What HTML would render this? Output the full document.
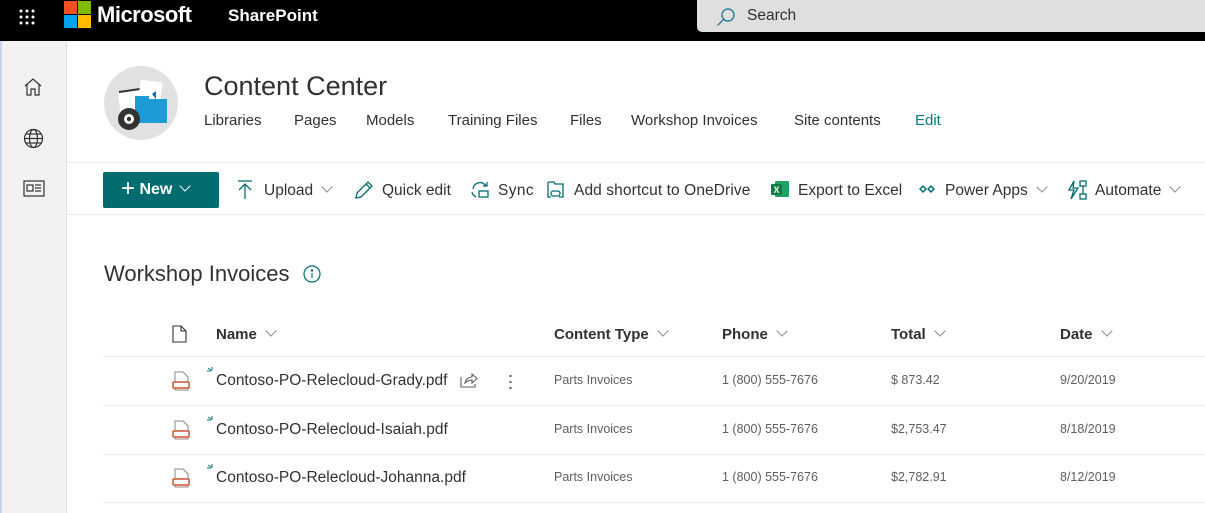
<!DOCTYPE html>
<html><head><meta charset="utf-8"><style>
*{margin:0;padding:0;box-sizing:border-box}
body{width:1205px;height:513px;overflow:hidden;background:#fff;font-family:"Liberation Sans",sans-serif;color:#323130;position:relative}
.a{position:absolute;white-space:nowrap}
.top{position:absolute;left:0;top:0;width:1205px;height:41px;background:#000}
.rail{position:absolute;left:0;top:41px;width:67px;height:472px;background:#f3f2f1;border-right:1px solid #e1dfdd;border-left:2px solid #c7d4ea}
.nav{font-size:15px;color:#323130;top:112px}
.cmd{font-size:15.5px;color:#323130;top:181px}
.hd{font-size:15px;font-weight:bold;color:#323130;top:326px}
.sm{font-size:12.5px;color:#605e5c}
.fn{font-size:15.5px;color:#323130}
.line{position:absolute;left:103px;width:1102px;height:1px;background:#edebe9}
.chev{display:inline-block;width:8px;height:8px;border-right:1.3px solid #8a8886;border-bottom:1.3px solid #8a8886;transform:rotate(45deg);margin-left:10px;position:relative;top:-4px}
</style></head><body>
<div class="top"></div>
<svg class="a" style="left:18px;top:8px" width="18" height="18" viewBox="0 0 18 18" fill="#fff"><g><circle cx="3" cy="3" r="1.5"/><circle cx="9" cy="3" r="1.5"/><circle cx="15" cy="3" r="1.5"/><circle cx="3" cy="9" r="1.5"/><circle cx="9" cy="9" r="1.5"/><circle cx="15" cy="9" r="1.5"/><circle cx="3" cy="15" r="1.5"/><circle cx="9" cy="15" r="1.5"/><circle cx="15" cy="15" r="1.5"/></g></svg>
<svg class="a" style="left:64px;top:1px" width="28" height="28"><rect x="0" y="0" width="13" height="13" fill="#f25022"/><rect x="14" y="0" width="13" height="13" fill="#7fba00"/><rect x="0" y="14" width="13" height="13" fill="#00a4ef"/><rect x="14" y="14" width="13" height="13" fill="#ffb900"/></svg>
<div class="a" style="left:97px;top:2px;font-size:22px;color:#fff;font-weight:bold;letter-spacing:-0.5px">Microsoft</div>
<div class="a" style="left:228px;top:6px;font-size:17px;color:#fff;font-weight:bold">SharePoint</div>
<div class="a" style="left:697px;top:0;width:508px;height:32px;background:#e1dfdd;border-radius:0 0 0 5px"></div>
<svg class="a" style="left:716px;top:7px" width="20" height="20" viewBox="0 0 20 20" fill="none" stroke="#2a7fa0" stroke-width="1.4"><circle cx="12" cy="8" r="6"/><line x1="7.5" y1="12.5" x2="1.5" y2="18.5"/></svg>
<div class="a" style="left:747px;top:7px;font-size:15.5px;color:#323130">Search</div>

<div class="rail"></div>
<svg class="a" style="left:23px;top:77px" width="20" height="20" viewBox="0 0 20 20" fill="none" stroke="#323130" stroke-width="1.2"><path d="M2 9 L10 2 L18 9 M4 7.5 V18 H8 V12 H12 V18 H16 V7.5"/></svg>
<svg class="a" style="left:23px;top:128px" width="21" height="21" viewBox="0 0 21 21" fill="none" stroke="#323130" stroke-width="1.2"><circle cx="10.5" cy="10.5" r="9"/><ellipse cx="10.5" cy="10.5" rx="4" ry="9"/><line x1="1.5" y1="10.5" x2="19.5" y2="10.5"/><line x1="3" y1="6" x2="18" y2="6"/><line x1="3" y1="15" x2="18" y2="15"/></svg>
<svg class="a" style="left:23px;top:180px" width="22" height="17" viewBox="0 0 22 17" fill="none" stroke="#323130" stroke-width="1.2"><rect x="1" y="1" width="20" height="15"/><rect x="4" y="5" width="6" height="6"/><line x1="12" y1="5" x2="18" y2="5"/><line x1="12" y1="8" x2="18" y2="8"/><line x1="12" y1="11" x2="18" y2="11"/></svg>

<svg class="a" style="left:103px;top:66px" width="76" height="74" viewBox="0 0 76 74"><circle cx="38" cy="37" r="37" fill="#e1e1e1"/><rect x="16" y="24" width="30" height="24" fill="#fff" transform="rotate(-8 32 34)"/><line x1="16" y1="26" x2="44" y2="22" stroke="#333" stroke-width="2"/><rect x="36" y="15" width="22" height="26" fill="#fff" transform="rotate(8 47 28)"/><path d="M49 28 l4 -3 v8z" fill="#0f6cbd"/><rect x="32" y="33" width="32" height="24" fill="#1d9bd7"/><rect x="32" y="30" width="14" height="4" fill="#1d9bd7"/><circle cx="26" cy="53" r="11" fill="#333"/><circle cx="26" cy="53" r="5" fill="#fff"/><circle cx="26" cy="53" r="2.2" fill="#333"/></svg>
<div class="a" style="left:204px;top:71px;font-size:27px;color:#323130">Content Center</div>
<div class="a nav" style="left:204px">Libraries</div>
<div class="a nav" style="left:294px">Pages</div>
<div class="a nav" style="left:366px">Models</div>
<div class="a nav" style="left:448px">Training Files</div>
<div class="a nav" style="left:570px">Files</div>
<div class="a nav" style="left:631px">Workshop Invoices</div>
<div class="a nav" style="left:794px">Site contents</div>
<div class="a nav" style="left:915px;color:#03787c">Edit</div>

<div class="a" style="left:67px;top:162px;width:1138px;height:1px;background:#edebe9"></div>
<div class="a" style="left:67px;top:214px;width:1138px;height:1px;background:#edebe9"></div>
<div class="a" style="left:103px;top:172px;width:116px;height:36px;background:#036c70;border-radius:2px;color:#fff;font-size:16px;font-weight:bold;padding:9px 0 0 18px"><span style="font-weight:normal;font-size:24px;position:relative;top:2px;line-height:0">+</span>&nbsp;New<span class="chev" style="border-color:#fff;width:8px;height:8px;margin-left:9px"></span></div>
<svg class="a" style="left:237px;top:180px" width="16" height="20" viewBox="0 0 16 20" fill="none" stroke="#036c70" stroke-width="1.3"><line x1="1" y1="1" x2="15" y2="1"/><path d="M8 19 V4 M2 10 L8 4 L14 10"/></svg>
<div class="a cmd" style="left:264px;top:182px">Upload<span class="chev"></span></div>
<svg class="a" style="left:354px;top:180px" width="20" height="20" viewBox="0 0 20 20" fill="none" stroke="#036c70" stroke-width="1.3"><path d="M2 18 L3 13 L14 2 L18 6 L7 17 Z M12 4 L16 8"/></svg>
<div class="a cmd" style="left:382px;top:182px">Quick edit</div>
<svg class="a" style="left:470px;top:180px" width="20" height="20" viewBox="0 0 20 20" fill="none" stroke="#036c70" stroke-width="1.3"><path d="M3 9 A7 7 0 0 1 16 6 M17 2 V6 H13 M2 12 A7 7 0 0 0 6 17"/><rect x="9" y="11" width="9" height="6"/></svg>
<div class="a cmd" style="left:498px;top:182px;letter-spacing:0.4px">Sync</div>
<svg class="a" style="left:546px;top:180px" width="20" height="20" viewBox="0 0 20 20" fill="none" stroke="#036c70" stroke-width="1.3"><path d="M2 2 H8 L9 4 H17 V17 H13 M2 2 V17 H5"/><rect x="5" y="11" width="9" height="5" rx="2.5"/></svg>
<div class="a cmd" style="left:574px;top:182px;letter-spacing:0.1px">Add shortcut to OneDrive</div>
<svg class="a" style="left:771px;top:180px" width="18" height="18" viewBox="0 0 18 18"><rect x="4" y="1" width="14" height="16" rx="1" fill="#21a366"/><rect x="0" y="4" width="11" height="11" rx="1" fill="#107c41"/><text x="2.5" y="13" font-size="9" font-weight="bold" fill="#fff" font-family="Liberation Sans">X</text></svg>
<div class="a cmd" style="left:798px;top:182px">Export to Excel</div>
<svg class="a" style="left:919px;top:183px" width="16" height="12" viewBox="0 0 16 12" fill="#036c70"><path d="M0 6 L4 2 L8 6 L4 10Z M8 6 L12 2 L16 6 L12 10Z"/><circle cx="4" cy="6" r="1.5" fill="#fff"/><circle cx="12" cy="6" r="1.5" fill="#fff"/></svg>
<div class="a cmd" style="left:945px;top:182px">Power Apps<span class="chev"></span></div>
<svg class="a" style="left:1067px;top:180px" width="20" height="20" viewBox="0 0 20 20" fill="none" stroke="#036c70" stroke-width="1.3"><path d="M7 1 L2 10 H7 L4 19 L11 8 H6 Z"/><rect x="13" y="1" width="6" height="5"/><rect x="13" y="14" width="6" height="5"/><path d="M16 6 V14"/></svg>
<div class="a cmd" style="left:1095px;top:182px">Automate<span class="chev"></span></div>

<div class="a" style="left:104px;top:261px;font-size:22px;color:#323130">Workshop Invoices</div>
<svg class="a" style="left:303px;top:265px" width="18" height="18" viewBox="0 0 18 18" fill="none" stroke="#036c70" stroke-width="1.2"><circle cx="9" cy="9" r="8"/><line x1="9" y1="8" x2="9" y2="13"/><circle cx="9" cy="5.5" r="0.6" fill="#036c70"/></svg>

<svg class="a" style="left:172px;top:325px" width="15" height="18" viewBox="0 0 15 18" fill="none" stroke="#323130" stroke-width="1.1"><path d="M1 1 H9 L14 6 V17 H1 Z M9 1 V6 H14"/></svg>
<div class="a hd" style="left:216px">Name<span class="chev"></span></div>
<div class="a hd" style="left:554px">Content Type<span class="chev"></span></div>
<div class="a hd" style="left:722px">Phone<span class="chev"></span></div>
<div class="a hd" style="left:891px">Total<span class="chev"></span></div>
<div class="a hd" style="left:1060px">Date<span class="chev"></span></div>

<div class="line" style="top:356px"></div>
<div class="line" style="top:405px"></div>
<div class="line" style="top:454px"></div>
<div class="line" style="top:502px"></div>

<svg class="a" style="left:172px;top:371px" width="18" height="20" viewBox="0 0 18 20" fill="none"><path d="M3 1 H11 L16 6 V19 H3 Z" stroke="#8a8886"/><rect x="1" y="11" width="16" height="6" rx="1" stroke="#d35230" stroke-width="1.5" fill="#fff"/></svg>
<svg class="a" style="left:207px;top:367px" width="10" height="10"><path d="M5 0 V4 M0 4 H4 M1 1 L4 3" stroke="#036c70" stroke-width="1"/></svg>
<div class="a fn" style="left:216px;top:372px">Contoso-PO-Relecloud-Grady.pdf</div>
<svg class="a" style="left:460px;top:372px" width="18" height="16" viewBox="0 0 18 16" fill="none" stroke="#605e5c" stroke-width="1.1"><path d="M1 5 V15 H15 V12 M5 11 C6 6 9 5 12 5 V2 L17 6.5 L12 11 V8 C9 8 7 9 5 11Z"/></svg>
<div class="a" style="left:509px;top:373px;width:3px;height:16px;background:radial-gradient(circle,#605e5c 1.1px,transparent 1.3px) 0 0/3px 6px"></div>
<div class="a sm" style="left:554px;top:373px">Parts Invoices</div>
<div class="a sm" style="left:722px;top:373px">1 (800) 555-7676</div>
<div class="a sm" style="left:891px;top:373px">$ 873.42</div>
<div class="a sm" style="left:1060px;top:373px">9/20/2019</div>

<svg class="a" style="left:172px;top:420px" width="18" height="20" viewBox="0 0 18 20" fill="none"><path d="M3 1 H11 L16 6 V19 H3 Z" stroke="#8a8886"/><rect x="1" y="11" width="16" height="6" rx="1" stroke="#d35230" stroke-width="1.5" fill="#fff"/></svg>
<svg class="a" style="left:207px;top:416px" width="10" height="10"><path d="M5 0 V4 M0 4 H4 M1 1 L4 3" stroke="#036c70" stroke-width="1"/></svg>
<div class="a fn" style="left:216px;top:421px">Contoso-PO-Relecloud-Isaiah.pdf</div>
<div class="a sm" style="left:554px;top:422px">Parts Invoices</div>
<div class="a sm" style="left:722px;top:422px">1 (800) 555-7676</div>
<div class="a sm" style="left:891px;top:422px">$2,753.47</div>
<div class="a sm" style="left:1060px;top:422px">8/18/2019</div>

<svg class="a" style="left:172px;top:468px" width="18" height="20" viewBox="0 0 18 20" fill="none"><path d="M3 1 H11 L16 6 V19 H3 Z" stroke="#8a8886"/><rect x="1" y="11" width="16" height="6" rx="1" stroke="#d35230" stroke-width="1.5" fill="#fff"/></svg>
<svg class="a" style="left:207px;top:464px" width="10" height="10"><path d="M5 0 V4 M0 4 H4 M1 1 L4 3" stroke="#036c70" stroke-width="1"/></svg>
<div class="a fn" style="left:216px;top:469px">Contoso-PO-Relecloud-Johanna.pdf</div>
<div class="a sm" style="left:554px;top:470px">Parts Invoices</div>
<div class="a sm" style="left:722px;top:470px">1 (800) 555-7676</div>
<div class="a sm" style="left:891px;top:470px">$2,782.91</div>
<div class="a sm" style="left:1060px;top:470px">8/12/2019</div>
</body></html>
